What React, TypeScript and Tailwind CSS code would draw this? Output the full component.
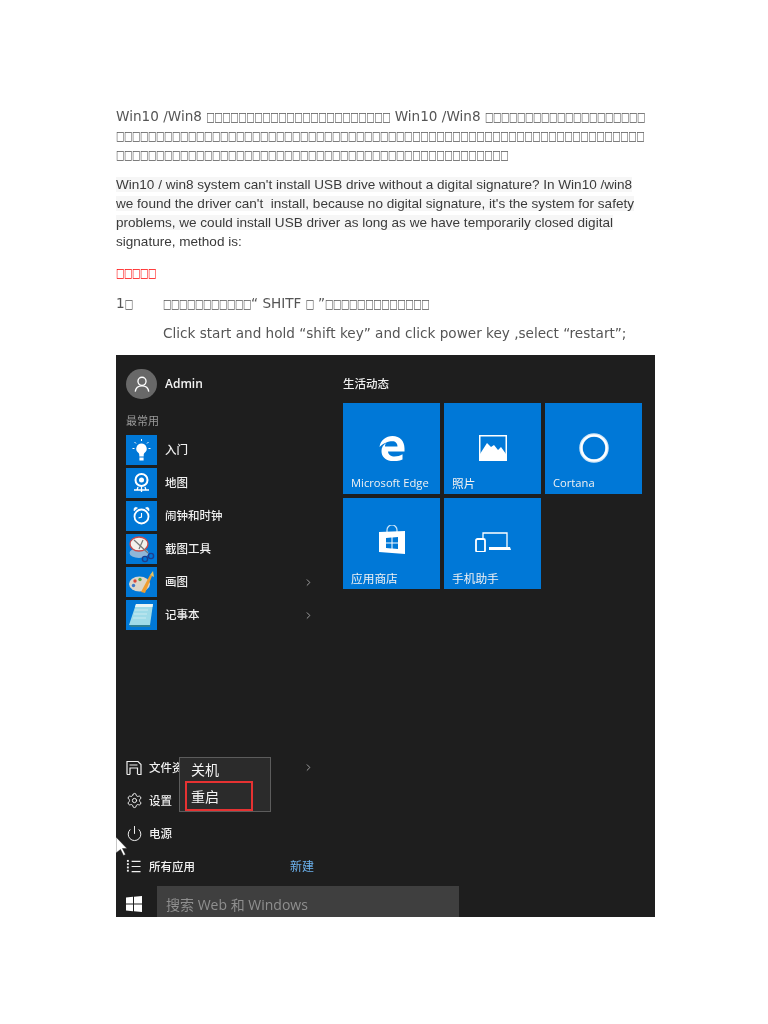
import React from "react";
import { ChevronRight, Settings, Power } from "lucide-react";

const B = ({ n }: { n: number }) => (
  <span className="inline-block font-['DejaVu_Sans'] text-[9px] tracking-[-0.5px] scale-y-[1.4] origin-[50%_65%]">{"□".repeat(n)}</span>
);
const docLine = "h-[19px] leading-[19px] whitespace-nowrap";

function Bulb() {
  return (
    <svg viewBox="0 0 31 30" className="w-[31px] h-[30px]">
      <path d="M15.5 8.5a5.2 5.2 0 0 0-3.2 9.3c.8.7 1 1.5 1 2.7v1h4.4v-1c0-1.2.2-2 1-2.7a5.2 5.2 0 0 0-3.2-9.3z" fill="#fff" />
      <rect x="13.4" y="22.5" width="4.2" height="3" fill="#fff" />
      <path d="M15.5 4v2M8.5 7l1.5 1.5M22.5 7L21 8.5M6.5 13.5h2M22.5 13.5h2" stroke="#fff" strokeWidth="1" />
    </svg>
  );
}
function MapPin() {
  return (
    <svg viewBox="0 0 31 30" className="w-[31px] h-[30px]" fill="none" stroke="#fff">
      <circle cx="15.5" cy="12" r="6" strokeWidth="2" />
      <circle cx="15.5" cy="12" r="2.5" fill="#fff" strokeWidth="0" />
      <path d="M8 22h15M12 19l-1 3M19 19l1 3M15.5 18.5V24" strokeWidth="1.3" />
    </svg>
  );
}
function Alarm() {
  return (
    <svg viewBox="0 0 31 30" className="w-[31px] h-[30px]" fill="none" stroke="#fff">
      <circle cx="15.5" cy="15.5" r="7" strokeWidth="1.8" />
      <path d="M15.5 12v4l-3 1" strokeWidth="1.1" />
      <path d="M8 7.5a2.5 2.5 0 0 1 3.5-.5L8 10zM23 7.5a2.5 2.5 0 0 0-3.5-.5L23 10z" fill="#fff" strokeWidth="0.6" />
    </svg>
  );
}
function Snip() {
  return (
    <svg viewBox="0 0 31 30" className="w-[31px] h-[30px]">
      <ellipse cx="13" cy="19" rx="9.5" ry="5" fill="#8fb6d8" />
      <ellipse cx="13" cy="10" rx="9" ry="7" fill="#f4f1ec" stroke="#c84b4b" strokeWidth="1.4" />
      <path d="M8 6l14 13M17 6l-4 9" stroke="#777" strokeWidth="1.2" />
      <circle cx="25" cy="22" r="2.6" fill="none" stroke="#1d3f8f" strokeWidth="1.4" />
      <circle cx="19" cy="25" r="2.6" fill="none" stroke="#1d3f8f" strokeWidth="1.4" />
    </svg>
  );
}
function Paint() {
  return (
    <svg viewBox="0 0 31 30" className="w-[31px] h-[30px]">
      <ellipse cx="13.5" cy="17" rx="10.5" ry="7.5" fill="#dcd6c8" />
      <circle cx="9" cy="14" r="1.7" fill="#d9473b" />
      <circle cx="14" cy="12.5" r="1.7" fill="#58a845" />
      <circle cx="7.5" cy="18.5" r="1.7" fill="#3e78c9" />
      <path d="M15 25L24 8l2 1-7 17z" fill="#ef9d2e" />
      <path d="M24 8l3-4 1 6z" fill="#e7c25e" />
    </svg>
  );
}
function Notepad() {
  return (
    <svg viewBox="0 0 31 30" className="w-[31px] h-[30px]">
      <path d="M10 4h17l-3 21H3z" fill="#9fdbe8" />
      <path d="M10 4h17l-.5 3H9z" fill="#e8f4f4" />
      <path d="M3 25h21l1 2H5z" fill="#2f7f94" />
      <path d="M9 10h13M8 14h13M7 18h13" stroke="#d7f0f4" strokeWidth="0.8" />
    </svg>
  );
}

const apps: { name: string; icon: React.ReactNode; arrow?: boolean }[] = [
  { name: "入门", icon: <Bulb /> },
  { name: "地图", icon: <MapPin /> },
  { name: "闹钟和时钟", icon: <Alarm /> },
  { name: "截图工具", icon: <Snip /> },
  { name: "画图", icon: <Paint />, arrow: true },
  { name: "记事本", icon: <Notepad />, arrow: true },
];

function Tile({ label, icon, low, cjk }: { label: string; icon: React.ReactNode; low?: boolean; cjk?: boolean }) {
  return (
    <div className="relative w-[97px] h-[91px] bg-[#0078d7] flex flex-col items-center">
      <div className={`h-[32px] flex items-center justify-center ${low ? "mt-[26px]" : "mt-[29px]"}`}>{icon}</div>
      <div className={`self-start pl-[8px] leading-[16px] text-[#f2f2f2] whitespace-nowrap ${cjk ? "text-[11.7px]" : "text-[11.2px]"} ${low ? "mt-[14px]" : "mt-[11px]"}`}>{label}</div>
    </div>
  );
}

function BottomRow({ icon, label, right }: { icon: React.ReactNode; label: string; right?: React.ReactNode }) {
  return (
    <div className="h-[33px] flex items-center">
      <div className="w-[23px] flex items-center">{icon}</div>
      <div className="text-[11.5px] text-[#f0f0f0] whitespace-nowrap flex-1 font-medium">{label}</div>
      {right}
    </div>
  );
}

export default function App() {
  return (
    <div className="bg-white min-h-[1024px] pt-[107px] pl-[116px] pr-[113px] w-[768px] overflow-hidden">
      <div className="w-[539px] text-[13.6px] text-[#555] font-['DejaVu_Sans',sans-serif] blur-[0.3px]">
        <div className={docLine}>Win10 /Win8 <B n={23} /> Win10 /Win8 <B n={20} /></div>
        <div className={docLine}><B n={66} /></div>
        <div className={docLine}><B n={49} /></div>

        <div className="mt-[11px] text-[13.55px] leading-[19px] text-[#3a3a3a] font-['Liberation_Sans',sans-serif] whitespace-nowrap">
          <div className="h-[19px]"><span className="bg-[#f6f6f6]">Win10 / win8 system can't install USB drive without a digital signature? In Win10 /win8</span></div>
          <div className="h-[19px]"><span className="bg-[#f6f6f6] whitespace-pre">we found the driver can't  install, because no digital signature, it's the system for safety</span></div>
          <div className="h-[19px]"><span className="bg-[#f6f6f6]">problems, we could install USB driver as long as we have temporarily closed digital</span></div>
          <div className="h-[19px]">signature, method is:</div>
        </div>

        <div className={`mt-[12px] text-[#f00] ${docLine}`}><B n={5} /></div>

        <div className={`mt-[12px] flex ${docLine}`}>
          <div className="w-[47px]">1<B n={1} /></div>
          <div><B n={11} />“ SHITF <B n={1} /> ”<B n={13} /></div>
        </div>
        <div className={`mt-[11px] pl-[47px] ${docLine}`}>Click start and hold “shift key” and click power key ,select “restart”;</div>
      </div>

      <div className="relative mt-[12px] w-[539px] h-[562px] bg-[#1e1e1e] flex flex-col overflow-hidden font-['Open_Sans','Noto_Sans_CJK_SC',sans-serif] blur-[0.3px]">
        <div className="flex-1 flex min-h-0">
          <div className="w-[227px] pl-[10px] pr-[29px] pb-[3px] flex flex-col">
            <div className="mt-[14px] h-[30px] flex items-center gap-[8px]">
              <div className="w-[31px] h-[30px] rounded-full bg-[#686868] flex items-center justify-center">
                <svg viewBox="0 0 20 20" className="w-[18px] h-[18px]" fill="none" stroke="#fff" strokeWidth="1.5">
                  <circle cx="10" cy="7" r="4.5" />
                  <path d="M2.5 18.5c.5-4 3-6.5 7.5-6.5s7 2.5 7.5 6.5" />
                </svg>
              </div>
              <div className="text-[12px] font-semibold text-[#f2f2f2]">Admin</div>
            </div>
            <div className="mt-[14px] h-[16px] leading-[16px] text-[11px] text-[#9a9a9a]">最常用</div>
            <div className="mt-[6px] flex flex-col gap-[3px]">
              {apps.map((a) => (
                <div key={a.name} className="h-[30px] flex items-center">
                  <div className="w-[31px] h-[30px] bg-[#0078d7] shrink-0">{a.icon}</div>
                  <div className="ml-[8px] text-[11.5px] font-medium text-[#f0f0f0] flex-1">{a.name}</div>
                  {a.arrow && <ChevronRight size={11} color="#a8a8a8" />}
                </div>
              ))}
            </div>
            <div className="mt-auto flex flex-col">
              <BottomRow
                label="文件资源管理器"
                icon={
                  <svg viewBox="0 0 16 16" className="w-[16px] h-[16px]" fill="none" stroke="#eee" strokeWidth="1.2">
                    <path d="M1 14.5V1.5h11l3 3v10h-3M1 14.5h3M4 14.5V8h7.5v6.5M3.5 5h8" />
                  </svg>
                }
                right={<ChevronRight size={11} color="#a8a8a8" />}
              />
              <BottomRow label="设置" icon={<Settings size={17} color="#eee" strokeWidth={1.4} />} />
              <BottomRow label="电源" icon={<Power size={17} color="#eee" strokeWidth={1.4} />} />
              <BottomRow
                label="所有应用"
                icon={
                  <svg viewBox="0 0 16 16" className="w-[15px] h-[15px]" stroke="#eee" strokeWidth="1.2" fill="#eee">
                    <path d="M6 2.5h9.5M6 8h9.5M6 13.5h9.5" />
                    <rect x="1" y="1" width="2" height="2" strokeWidth="0" />
                    <rect x="1" y="4.5" width="2" height="2" strokeWidth="0" />
                    <rect x="1" y="8" width="2" height="2" strokeWidth="0" />
                    <rect x="1" y="11.5" width="2" height="2" strokeWidth="0" />
                  </svg>
                }
                right={<span className="text-[12px] text-[#6cb2ee]">新建</span>}
              />
            </div>
          </div>

          <div className="flex-1">
            <div className="mt-[21px] h-[16px] leading-[16px] text-[11.5px] font-medium text-[#f0f0f0]">生活动态</div>
            <div className="mt-[11px] grid grid-cols-[97px_97px_97px] gap-x-[4px] gap-y-[4px]">
              <Tile
                label="Microsoft Edge"
                icon={
                  <svg viewBox="0 0 26 26" className="w-[26px] h-[26px]">
                    <path fill="#fff" d="M0.5 12C1.500 5 7 1 13.500 1 21 1 25.500 6 25.500 13.500V16.500H9c.3 3.300 3 5 6.500 5 3 0 5.500-.8 8-2.200v5.100c-2.500 1.200-5.500 1.800-9 1.800C7 26.200 2.500 22 2.500 16c0-3.500 1.600-6.300 5.100-8.300-1.200 1.200-1.700 2.500-1.600 3.800h12.500c0-3.300-2-5.300-5.200-5.300C9.500 6.200 4 8 0.500 12z" />
                  </svg>
                }
              />
              <Tile
                cjk
                label="照片"
                icon={
                  <svg viewBox="0 0 28 26" className="w-[28px] h-[26px]">
                    <rect x="0.75" y="0.75" width="26.5" height="24.5" fill="none" stroke="#fff" strokeWidth="1.5" />
                    <path fill="#fff" d="M1 25V19l7-11 4 4 3-2 4 5 3-3 5 7v6z" />
                  </svg>
                }
              />
              <Tile
                label="Cortana"
                icon={
                  <svg viewBox="0 0 30 30" className="w-[30px] h-[30px]">
                    <circle cx="15" cy="15" r="13" fill="none" stroke="#cfe6f8" strokeWidth="3.5" />
                    <circle cx="15" cy="15" r="12.6" fill="none" stroke="#fff" strokeWidth="2" />
                  </svg>
                }
              />
              <Tile
                low
                cjk
                label="应用商店"
                icon={
                  <svg viewBox="0 0 28 30" className="w-[28px] h-[30px]">
                    <path d="M9 9V5a5 5 0 0 1 10 0v4" fill="none" stroke="#cfe6f8" strokeWidth="1.2" />
                    <path fill="#fff" d="M1 7l26-1v23L1 27z" />
                    <path fill="#0078d7" d="M8 13l5.500-.5v5H8zM14.500 12.400L20 12v5.500h-5.500zM8 18.500h5.500v5L8 23zM14.500 18.500H20V24l-5.500-.5z" />
                  </svg>
                }
              />
              <Tile
                low
                cjk
                label="手机助手"
                icon={
                  <svg viewBox="0 -4 36 24" className="w-[36px] h-[24px]">
                    <path d="M8 6V1h24v16" fill="none" stroke="#fff" strokeWidth="1.3" />
                    <rect x="1" y="7" width="9" height="13" rx="1.5" fill="none" stroke="#fff" strokeWidth="1.8" />
                    <path fill="#fff" d="M14 15h21l1 3H14z" />
                  </svg>
                }
              />
            </div>
          </div>
        </div>

        <div className="h-[31px] flex items-center shrink-0">
          <div className="w-[41px] pl-[10px] pt-[5px]">
            <svg viewBox="0 0 16 16" className="w-[16px] h-[16px]" fill="#fff">
              <path d="M0 1.500l7-.7v6.600H0zM8 .7L16 0v7.400H8zM0 8.400h7v6.800l-7-.7zM8 8.400h8V16l-8-.7z" />
            </svg>
          </div>
          <div className="w-[302px] h-full bg-[#3f3f3f] pl-[9px] pt-[6px] flex items-center text-[14px] text-[#8f8f8f] whitespace-nowrap">搜索 Web 和 Windows</div>
        </div>

        {/* power flyout */}
        <div className="absolute left-[63px] top-[402px] w-[92px] h-[55px] bg-[#2b2b2b] border border-[#5c5c5c]">
          <div className="pl-[11px] pt-[2px] h-[27px] leading-[20px] text-[14px] text-[#f4f4f4]">关机</div>
          <div className="pl-[11px] h-[24px] leading-[24px] text-[14px] text-[#f4f4f4]">重启</div>
          <div className="absolute left-[5px] top-[23px] w-[68px] h-[30px] border-2 border-[#e63232]" />
        </div>

        {/* mouse pointer */}
        <svg viewBox="0 0 12 20" className="absolute left-0 top-[482px] w-[12px] h-[20px]">
          <path d="M0 0l11 11.500H6.500l3 6-2 1-3-6L0 16z" fill="#fff" stroke="#222" strokeWidth="0.5" />
        </svg>
      </div>
    </div>
  );
}
